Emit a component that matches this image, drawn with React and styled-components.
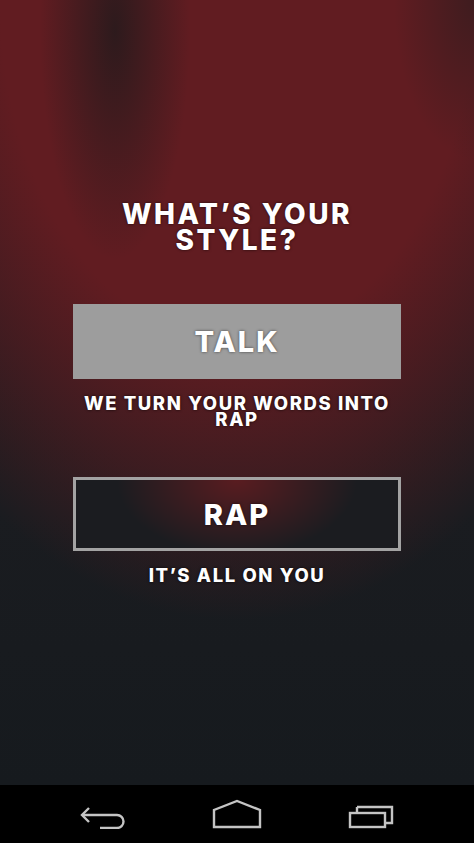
import React from 'react';
import styled, { createGlobalStyle } from 'styled-components';

const GlobalStyle = createGlobalStyle`
  html, body {
    margin: 0;
    padding: 0;
    background: #000;
  }
  #root {
    width: 474px;
    height: 843px;
  }
`;

const Screen = styled.div`
  width: 474px;
  height: 843px;
  display: flex;
  flex-direction: column;
  overflow: hidden;
  font-family: Inter, "Open Sans", sans-serif;
`;

const Stage = styled.main`
  flex: 1;
  display: flex;
  flex-direction: column;
  align-items: center;
  padding: 201px 60px 0;
  box-sizing: border-box;
  background:
    radial-gradient(ellipse 75px 230px at 115px 30px, rgba(36, 26, 28, 0.85), rgba(36, 26, 28, 0) 100%),
    radial-gradient(ellipse 80px 160px at 474px 0px, rgba(48, 28, 30, 0.7), rgba(48, 28, 30, 0) 100%),
    radial-gradient(ellipse 430px 620px at 237px 0px, #611c21 55%, rgba(97, 28, 33, 0) 100%),
    linear-gradient(180deg, #2a1b1e 0%, #1a1c20 65%, #161a1e 100%);
`;

const Title = styled.h1`
  margin: 0 0 51px;
  color: #fff;
  font-size: 28px;
  font-weight: 800;
  line-height: 26px;
  text-align: center;
  letter-spacing: 2.5px;
  text-shadow: 0 0 3px rgba(0, 0, 0, 0.7);
`;

const Choice = styled.button`
  width: 328px;
  height: ${(p) => (p.$filled ? '75px' : '74px')};
  display: flex;
  align-items: center;
  justify-content: center;
  box-sizing: border-box;
  cursor: pointer;
  font-family: inherit;
  font-size: 29px;
  font-weight: 800;
  letter-spacing: 2px;
  color: #fff;
  text-shadow: 0 0 3px rgba(0, 0, 0, 0.6);
  border: ${(p) => (p.$filled ? 'none' : '3px solid #a3a3a3')};
  background: ${(p) =>
    p.$filled
      ? '#9d9d9d'
      : 'radial-gradient(ellipse 120px 75px at 50% 0%, rgba(105, 28, 32, 0.8), rgba(30, 28, 32, 0) 100%), #1b1c20'};
`;

const Caption = styled.p`
  margin: ${(p) => p.$mt} 0 ${(p) => p.$mb};
  color: #fff;
  font-size: 18.5px;
  font-weight: 800;
  line-height: 16px;
  letter-spacing: 1.6px;
  text-align: center;
  text-shadow: 0 0 3px rgba(0, 0, 0, 0.8);
`;

const NavBar = styled.nav`
  height: 58px;
  background: #000;
  display: flex;
  align-items: center;
  justify-content: center;
  gap: 84px;
`;

const NavIcon = styled.svg`
  width: 50px;
  height: 30px;
  fill: none;
  stroke: #c4c4c4;
  stroke-width: 2.4;
`;

export default function App() {
  return (
    <>
      <GlobalStyle />
      <Screen>
        <Stage>
          <Title>
            WHAT’S YOUR
            <br />
            STYLE?
          </Title>
          <Choice $filled>TALK</Choice>
          <Caption $mt="16px" $mb="50px">
            WE TURN YOUR WORDS INTO
            <br />
            RAP
          </Caption>
          <Choice>RAP</Choice>
          <Caption $mt="16px" $mb="0">
            IT’S ALL ON YOU
          </Caption>
        </Stage>
        <NavBar>
          <NavIcon viewBox="0 0 50 30">
            <path d="M11 9 L4 16 L11 23" />
            <path d="M4 16 H39 A6.5 6.5 0 0 1 39 29 H22" />
          </NavIcon>
          <NavIcon viewBox="0 0 50 30">
            <path d="M2 28 V11 L25 2 L48 11 V28 Z" />
          </NavIcon>
          <NavIcon viewBox="0 0 50 30">
            <rect x="4" y="14" width="35" height="14" />
            <path d="M11 8 H46 V24 H39" />
            <path d="M11 8 V14" />
          </NavIcon>
        </NavBar>
      </Screen>
    </>
  );
}
